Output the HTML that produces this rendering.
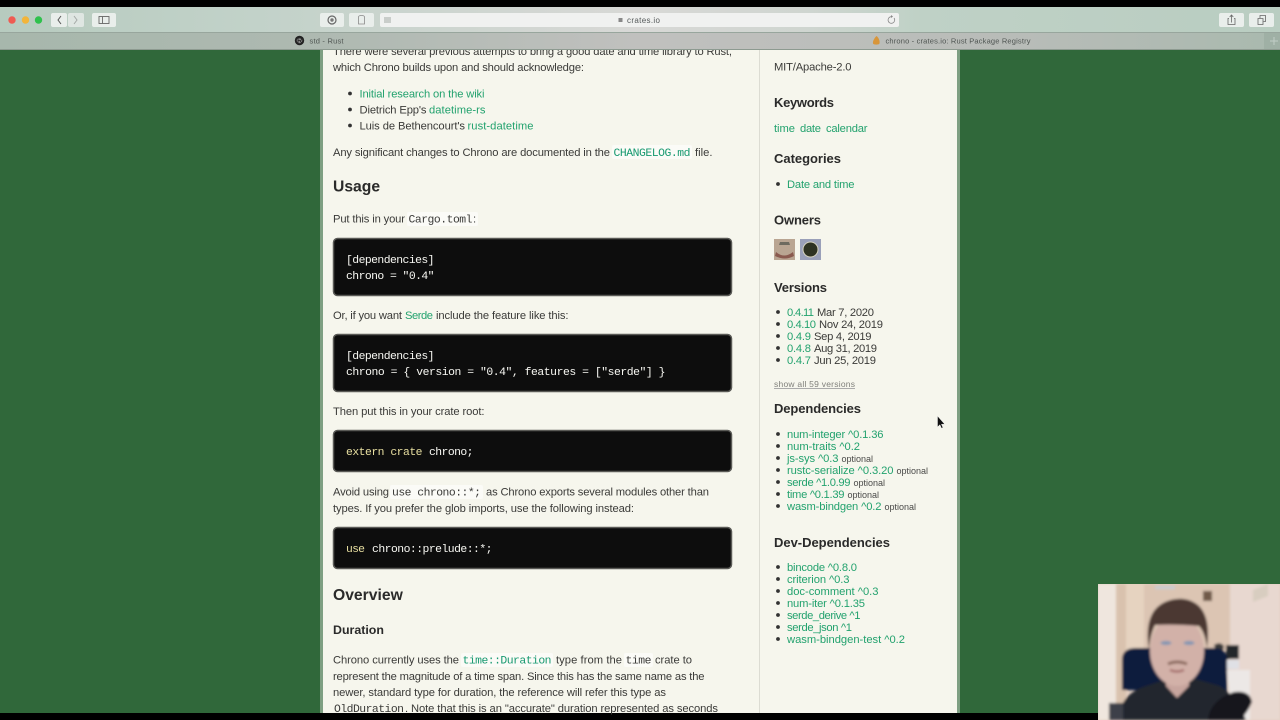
<!DOCTYPE html>
<html><head><meta charset="utf-8"><title>chrono - crates.io: Rust Package Registry</title>
<style>
html,body{margin:0;padding:0;width:1280px;height:720px;overflow:hidden;background:#000}
svg{display:block}
text{font-family:"Liberation Sans",sans-serif;font-size:11.2px;fill:#3a3a38}
.m{font-family:"Liberation Mono",monospace;font-size:11.4px}
.l{fill:#23a26e}
.h{font-weight:bold;fill:#2b2b2a;font-size:13px}
.c{fill:#f7f7f2}
.y{fill:#e8dfa0}
.o{font-size:9px;fill:#4a4a48}
.t{font-size:7.5px;fill:#4f5552}
</style></head><body>
<svg width="1280" height="720" viewBox="0 0 1280 720" xmlns="http://www.w3.org/2000/svg">
<defs>
<linearGradient id="tb" x1="0" x2="1" y1="0" y2="0">
<stop offset="0" stop-color="#b7cbbf"/><stop offset=".2" stop-color="#c2d2c9"/><stop offset=".5" stop-color="#d8d8d6"/><stop offset=".63" stop-color="#cfd5d0"/><stop offset=".72" stop-color="#bfd1c6"/><stop offset="1" stop-color="#b9cdc1"/>
</linearGradient>
<linearGradient id="tb2" x1="0" x2="1" y1="0" y2="0">
<stop offset="0" stop-color="#a7b7ac"/><stop offset=".25" stop-color="#aeb9b1"/><stop offset=".5" stop-color="#c0c0be"/><stop offset=".8" stop-color="#b8bcb8"/><stop offset="1" stop-color="#a9b9ae"/>
</linearGradient>
<filter id="b1" x="-10%" y="-10%" width="120%" height="120%"><feGaussianBlur stdDeviation="1.3"/></filter>
<filter id="b0" x="0" y="0" width="100%" height="100%"><feGaussianBlur stdDeviation=".3"/></filter>
</defs>
<rect width="1280" height="720" fill="#000"/>
<rect y="50" width="1280" height="663" fill="#30683a"/>
<rect x="320" y="50" width="640" height="663" fill="#7e9f82"/>
<rect x="323" y="50" width="634" height="663" fill="#f6f6ed"/>
<rect x="759" y="50" width="1" height="663" fill="#dcdcd3"/>

<g filter="url(#b0)">
<!-- main column -->
<text x="333" y="55" textLength="399" lengthAdjust="spacing">There were several previous attempts to bring a good date and time library to Rust,</text>
<text x="333" y="71" textLength="251" lengthAdjust="spacing">which Chrono builds upon and should acknowledge:</text>
<circle cx="350" cy="93.500" r="1.900" fill="#333"/><circle cx="350" cy="109.500" r="1.900" fill="#333"/><circle cx="350" cy="125.500" r="1.900" fill="#333"/>
<text x="359.500" y="97.500" class="l" textLength="125" lengthAdjust="spacing">Initial research on the wiki</text>
<text x="359.500" y="113.500" textLength="67" lengthAdjust="spacing">Dietrich Epp's</text>
<text x="429" y="113.500" class="l" textLength="56.500" lengthAdjust="spacing">datetime-rs</text>
<text x="359.500" y="129.500" textLength="105.500" lengthAdjust="spacing">Luis de Bethencourt's</text>
<text x="467.500" y="129.500" class="l" textLength="66" lengthAdjust="spacing">rust-datetime</text>
<text x="333" y="156" textLength="277" lengthAdjust="spacing">Any significant changes to Chrono are documented in the</text>
<rect x="612" y="145" width="80" height="14" rx="2" fill="#fbfbf7"/>
<text x="613.500" y="156" class="m l" style="fill:#17996f" textLength="77" lengthAdjust="spacing">CHANGELOG.md</text>
<text x="695" y="156" textLength="17.500" lengthAdjust="spacing">file.</text>
<text x="333" y="191.500" class="h" style="font-size:15.700px">Usage</text>
<text x="333" y="222.500" textLength="72" lengthAdjust="spacing">Put this in your</text>
<rect x="407" y="212" width="71" height="14" rx="2" fill="#fbfbf7"/>
<text x="408.500" y="222.500" class="m" textLength="64" lengthAdjust="spacing">Cargo.toml</text>
<text x="473" y="222.500">:</text>

<rect x="333.500" y="238.500" width="398" height="57" rx="4" fill="#111" stroke="#5a5a56" stroke-width="1.500"/>
<text x="346" y="263" class="m c" textLength="88.500" lengthAdjust="spacing">[dependencies]</text>
<text x="346" y="279" class="m c" textLength="88.500" lengthAdjust="spacing">chrono = "0.4"</text>

<text x="333" y="319" textLength="69" lengthAdjust="spacing">Or, if you want</text>
<text x="405" y="319" class="l" textLength="28" lengthAdjust="spacing">Serde</text>
<text x="436" y="319" textLength="132.500" lengthAdjust="spacing">include the feature like this:</text>

<rect x="333.500" y="334.500" width="398" height="57" rx="4" fill="#111" stroke="#5a5a56" stroke-width="1.500"/>
<text x="346" y="359" class="m c" textLength="88.500" lengthAdjust="spacing">[dependencies]</text>
<text x="346" y="375" class="m c" textLength="319.500" lengthAdjust="spacing">chrono = { version = "0.4", features = ["serde"] }</text>

<text x="333" y="415" textLength="151.500" lengthAdjust="spacing">Then put this in your crate root:</text>

<rect x="333.500" y="430.500" width="398" height="41" rx="4" fill="#111" stroke="#5a5a56" stroke-width="1.500"/>
<text x="346" y="455" class="m y" textLength="76.500" lengthAdjust="spacing">extern crate</text>
<text x="429" y="455" class="m c" textLength="44.500" lengthAdjust="spacing">chrono;</text>

<text x="333" y="495.500" textLength="56" lengthAdjust="spacing">Avoid using</text>
<rect x="390" y="485" width="93" height="14" rx="2" fill="#fbfbf7"/>
<text x="392" y="495.500" class="m" textLength="89" lengthAdjust="spacing">use chrono::*;</text>
<text x="486" y="495.500" textLength="223" lengthAdjust="spacing">as Chrono exports several modules other than</text>
<text x="333" y="512" textLength="301" lengthAdjust="spacing">types. If you prefer the glob imports, use the following instead:</text>

<rect x="333.500" y="527.500" width="398" height="41" rx="4" fill="#111" stroke="#5a5a56" stroke-width="1.500"/>
<text x="346" y="552" class="m y" textLength="19" lengthAdjust="spacing">use</text>
<text x="372" y="552" class="m c" textLength="120.500" lengthAdjust="spacing">chrono::prelude::*;</text>

<text x="333" y="600" class="h" style="font-size:15.700px">Overview</text>
<text x="333" y="634" class="h" style="font-size:12.400px">Duration</text>

<text x="333" y="663.500" textLength="126" lengthAdjust="spacing">Chrono currently uses the</text>
<rect x="461" y="653" width="92" height="14" rx="2" fill="#fbfbf7"/>
<text x="462.500" y="663.500" class="m" style="fill:#17996f" textLength="89" lengthAdjust="spacing">time::Duration</text>
<text x="556" y="663.500" textLength="66" lengthAdjust="spacing">type from the</text>
<rect x="624" y="653" width="29" height="14" rx="2" fill="#fbfbf7"/>
<text x="625.500" y="663.500" class="m" textLength="26" lengthAdjust="spacing">time</text>
<text x="655" y="663.500" textLength="37" lengthAdjust="spacing">crate to</text>
<text x="333" y="680" textLength="371.500" lengthAdjust="spacing">represent the magnitude of a time span. Since this has the same name as the</text>
<text x="333" y="696" textLength="333" lengthAdjust="spacing">newer, standard type for duration, the reference will refer this type as</text>
<text x="334" y="712" class="m" textLength="70" lengthAdjust="spacing">OldDuration</text>
<text x="405" y="712" textLength="313" lengthAdjust="spacing">. Note that this is an "accurate" duration represented as seconds</text>

<!-- sidebar -->
<text x="774" y="70.500" textLength="77.500" lengthAdjust="spacing">MIT/Apache-2.0</text>
<text x="774" y="107" class="h" textLength="60" lengthAdjust="spacing">Keywords</text>
<text x="774" y="132" class="l" textLength="21" lengthAdjust="spacing">time</text>
<text x="800" y="132" class="l" textLength="21" lengthAdjust="spacing">date</text>
<text x="826" y="132" class="l" textLength="41.500" lengthAdjust="spacing">calendar</text>
<text x="774" y="163" class="h" textLength="67" lengthAdjust="spacing">Categories</text>
<circle cx="778" cy="184" r="1.900" fill="#333"/>
<text x="787" y="188" class="l" textLength="67.500" lengthAdjust="spacing">Date and time</text>
<text x="774" y="224.500" class="h" textLength="47" lengthAdjust="spacing">Owners</text>
<rect x="774" y="239" width="21" height="21" fill="#b9a592"/>
<path d="M776 252q8 7 17 0l1 4q-9 5-19 0z" fill="#8a5a50"/><path d="M780 242h9l1 3h-11z" fill="#6d6a5e"/>
<rect x="800" y="239" width="21" height="21" fill="#9aa0b9"/>
<circle cx="810.500" cy="249.500" r="8" fill="#d8d4c0"/><circle cx="810.500" cy="249.500" r="7" fill="#2d3320"/>
<text x="774" y="292" class="h" textLength="53" lengthAdjust="spacing">Versions</text>
<g fill="#333"><circle cx="778" cy="312" r="1.900"/><circle cx="778" cy="324" r="1.900"/><circle cx="778" cy="336" r="1.900"/><circle cx="778" cy="348" r="1.900"/><circle cx="778" cy="360" r="1.900"/></g>
<text x="787" y="316" class="l" textLength="27" lengthAdjust="spacing">0.4.11</text><text x="817" y="316" textLength="57" lengthAdjust="spacing">Mar 7, 2020</text>
<text x="787" y="328" class="l" textLength="29" lengthAdjust="spacing">0.4.10</text><text x="819" y="328" textLength="64" lengthAdjust="spacing">Nov 24, 2019</text>
<text x="787" y="340" class="l" textLength="24" lengthAdjust="spacing">0.4.9</text><text x="814" y="340" textLength="57.500" lengthAdjust="spacing">Sep 4, 2019</text>
<text x="787" y="352" class="l" textLength="24" lengthAdjust="spacing">0.4.8</text><text x="814" y="352" textLength="63" lengthAdjust="spacing">Aug 31, 2019</text>
<text x="787" y="364" class="l" textLength="24" lengthAdjust="spacing">0.4.7</text><text x="814" y="364" textLength="62" lengthAdjust="spacing">Jun 25, 2019</text>
<text x="774" y="387" style="font-size:8.500px;fill:#7f7f7a" textLength="81" lengthAdjust="spacing">show all 59 versions</text>
<line x1="774" y1="388.500" x2="855" y2="388.500" stroke="#aaa"/>
<text x="774" y="413" class="h" textLength="87" lengthAdjust="spacing">Dependencies</text>
<g fill="#333"><circle cx="778" cy="434" r="1.900"/><circle cx="778" cy="446" r="1.900"/><circle cx="778" cy="458" r="1.900"/><circle cx="778" cy="470" r="1.900"/><circle cx="778" cy="482" r="1.900"/><circle cx="778" cy="494" r="1.900"/><circle cx="778" cy="506" r="1.900"/></g>
<text x="787" y="438" class="l" textLength="96.500" lengthAdjust="spacing">num-integer ^0.1.36</text>
<text x="787" y="450" class="l" textLength="73" lengthAdjust="spacing">num-traits ^0.2</text>
<text x="787" y="462" class="l" textLength="51.500" lengthAdjust="spacing">js-sys ^0.3</text><text x="841.500" y="462" class="o" textLength="31.500" lengthAdjust="spacing">optional</text>
<text x="787" y="474" class="l" textLength="106.500" lengthAdjust="spacing">rustc-serialize ^0.3.20</text><text x="896.500" y="474" class="o" textLength="31.500" lengthAdjust="spacing">optional</text>
<text x="787" y="486" class="l" textLength="63.500" lengthAdjust="spacing">serde ^1.0.99</text><text x="853.500" y="486" class="o" textLength="31.500" lengthAdjust="spacing">optional</text>
<text x="787" y="498" class="l" textLength="57.500" lengthAdjust="spacing">time ^0.1.39</text><text x="847.500" y="498" class="o" textLength="31.500" lengthAdjust="spacing">optional</text>
<text x="787" y="510" class="l" textLength="94.500" lengthAdjust="spacing">wasm-bindgen ^0.2</text><text x="884.500" y="510" class="o" textLength="31.500" lengthAdjust="spacing">optional</text>
<text x="774" y="547" class="h" textLength="116" lengthAdjust="spacing">Dev-Dependencies</text>
<g fill="#333"><circle cx="778" cy="567" r="1.900"/><circle cx="778" cy="579" r="1.900"/><circle cx="778" cy="591" r="1.900"/><circle cx="778" cy="603" r="1.900"/><circle cx="778" cy="615" r="1.900"/><circle cx="778" cy="627" r="1.900"/><circle cx="778" cy="639" r="1.900"/></g>
<text x="787" y="571" class="l" textLength="70" lengthAdjust="spacing">bincode ^0.8.0</text>
<text x="787" y="583" class="l" textLength="62.500" lengthAdjust="spacing">criterion ^0.3</text>
<text x="787" y="595" class="l" textLength="91.500" lengthAdjust="spacing">doc-comment ^0.3</text>
<text x="787" y="607" class="l" textLength="78" lengthAdjust="spacing">num-iter ^0.1.35</text>
<text x="787" y="619" class="l" textLength="73.500" lengthAdjust="spacing">serde_derive ^1</text>
<text x="787" y="631" class="l" textLength="65" lengthAdjust="spacing">serde_json ^1</text>
<text x="787" y="643" class="l" textLength="118" lengthAdjust="spacing">wasm-bindgen-test ^0.2</text>
</g>

<!-- cursor -->
<path d="M937.500 416v11l2.400-2.300 1.600 3.600 1.500-.7-1.600-3.400h3.300z" fill="#111" stroke="#fff" stroke-width=".4"/>

<!-- browser chrome (over page content) -->
<rect y="0" width="1280" height="7" fill="#000"/>
<rect y="7" width="1280" height="25" fill="url(#tb)"/>
<rect y="32" width="1280" height="1" fill="#98a69d"/>
<rect y="33" width="1280" height="16" fill="url(#tb2)"/>
<rect y="49" width="1280" height="1" fill="#8d9a90"/>
<rect x="1264" y="33" width="16" height="16" fill="#9fb0a5"/>
<path d="M1270 41h8M1274 37v8" stroke="#c2cec6" stroke-width="1"/>
<circle cx="12" cy="20" r="3.700" fill="#ef5b52"/><circle cx="25.500" cy="20" r="3.700" fill="#f2b53a"/><circle cx="38.500" cy="20" r="3.700" fill="#2fc14d"/>
<rect x="51" y="13" width="16" height="14" rx="2" fill="#e9eeeb"/><rect x="68" y="13" width="16" height="14" rx="2" fill="#dfe6e2"/>
<path d="M61 16l-3 4 3 4" fill="none" stroke="#555" stroke-width="1"/><path d="M74 16l3 4-3 4" fill="none" stroke="#a5aaa7" stroke-width="1"/>
<rect x="92" y="13" width="24" height="14" rx="2" fill="#e9eeeb"/>
<rect x="99" y="16.500" width="10" height="7" fill="none" stroke="#666" stroke-width=".9"/><line x1="102.500" y1="16.500" x2="102.500" y2="23.500" stroke="#666" stroke-width=".9"/>
<rect x="320" y="13" width="24" height="14" rx="2" fill="#e9eeeb"/>
<circle cx="332" cy="20" r="4" fill="none" stroke="#666" stroke-width="1.200"/><circle cx="332" cy="20" r="1.700" fill="#777"/>
<rect x="349" y="13" width="25" height="14" rx="2" fill="#e9eeeb"/>
<path d="M358.500 24v-7q0-1.500 3-1.500t3 1.500v7z" fill="none" stroke="#8a8a8a" stroke-width=".8"/>
<rect x="380" y="13" width="519" height="14" rx="2" fill="#f0f1f0"/>
<rect x="384" y="17" width="7" height="6" fill="#c9cdca"/>
<rect x="618.500" y="18" width="4" height="4" fill="#888"/>
<text x="627" y="23" style="font-size:8px;fill:#55595a" textLength="33" lengthAdjust="spacing">crates.io</text>
<path d="M894 18a3.300 3.300 0 1 1-2.500-1.300" fill="none" stroke="#888" stroke-width=".8"/><path d="M891 15l2 1.500-2 1.500z" fill="#888"/>
<rect x="1219" y="13" width="25" height="14" rx="2" fill="#e9eeeb"/>
<path d="M1229 18.500h-1v6h7v-6h-1M1231.500 22.500v-7M1229.700 17l1.800-2 1.800 2" fill="none" stroke="#666" stroke-width=".8"/>
<rect x="1249" y="13" width="25" height="14" rx="2" fill="#e9eeeb"/>
<path d="M1258 18.500h5v6h-5zM1260 18v-2.500h5.500v6h-2" fill="none" stroke="#666" stroke-width=".8"/>
<circle cx="299.500" cy="40.500" r="4.700" fill="#222"/><circle cx="299.500" cy="40.500" r="2.800" fill="#ddd" opacity=".55"/><path d="M298 43v-5h2q1.500 0 1.500 1.300t-1.500 1.200h-2m2 0l1.500 2.500" fill="none" stroke="#222" stroke-width=".8"/>
<text x="309.500" y="43.500" class="t" textLength="34" lengthAdjust="spacing">std - Rust</text>
<path d="M876.500 36c2.500 2 3.500 5 3 7.500-.5 1.500-6 1.500-6.500 0-.500-2.500 1.500-5.500 3.500-7.500z" fill="#d8963a"/>
<text x="885.500" y="43.500" class="t" textLength="145" lengthAdjust="spacing">chrono - crates.io: Rust Package Registry</text>

<!-- webcam -->
<svg x="1098" y="584" width="182" height="136" viewBox="1098 584 182 136">
<rect x="1098" y="584" width="182" height="136" fill="#e3cfc2"/>
<g filter="url(#b1)">
<rect x="1098" y="584" width="18" height="136" fill="#efe6de"/>
<rect x="1116" y="584" width="10" height="136" fill="#d9c2ae"/>
<rect x="1126" y="584" width="18" height="70" fill="#e6d3c0"/>
<rect x="1144" y="584" width="86" height="66" fill="#dcc5b3"/>
<rect x="1230" y="584" width="50" height="136" fill="#e8d8d0"/>
<rect x="1203" y="591" width="9" height="10" fill="#6f5a48"/>
<path d="M1253 590l15-6v12l-15 6z" fill="#d8cdc0"/>
<rect x="1155" y="586" width="20" height="3" fill="#c8ccd4"/>
<path d="M1227 670h23v50h-18z" fill="#ece8e6"/>
<rect x="1225" y="660" width="14" height="9" fill="#dfe0e5"/>
<rect x="1226" y="645" width="13" height="14" fill="#23252c"/>
<path d="M1214 645q6-4 10 1l-2 9h-5z" fill="#3a3a3a"/>
<path d="M1122 690v-30q0-12 14-12h78q13 0 13 12v32z" fill="#0e1a3c"/>
<path d="M1118 720q2-26 28-34l24-8h22l28 8q16 10 26 34z" fill="#22252d"/>
<path d="M1208 720q2-20 26-28 16-2 18 10-4 10-12 18z" fill="#12141c"/>
<rect x="1109" y="703" width="14" height="17" fill="#3e4048"/>
<path d="M1166 672v14l11 12 12-12v-14z" fill="#c7a59e"/>
<ellipse cx="1177" cy="651" rx="27" ry="35" fill="#d2b1a8"/>
<path d="M1149 650q-6-38 16-48 20-8 34 4 12 12 8 42-2-16-8-22-24-2-44-1-5 10-6 25z" fill="#4c3930"/>
<ellipse cx="1166" cy="643" rx="5.500" ry="2" fill="#8396b2"/><ellipse cx="1189" cy="643" rx="5.500" ry="2" fill="#8396b2"/>
<path d="M1168 664q9-4 19 0" stroke="#8c6a5e" stroke-width="3" fill="none"/>
<path d="M1170 670q7 3 14 0" stroke="#a66f6d" stroke-width="2.500" fill="none"/>
</g>
</svg>
</svg>
</body></html>
